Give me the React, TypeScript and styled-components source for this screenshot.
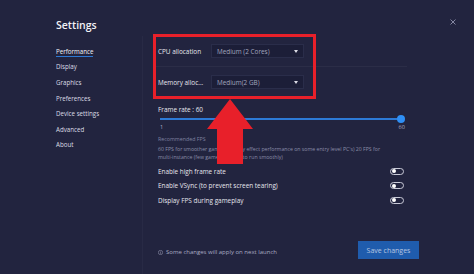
import React from 'react';
import styled, { createGlobalStyle } from 'styled-components';

/* global */
const GlobalStyle = createGlobalStyle`
  html, body {
    margin: 0;
    padding: 0;
    background: #22243f;
  }
  body {
    font-family: "Open Sans", "Liberation Sans", sans-serif;
  }
  * {
    box-sizing: border-box;
  }
`

/* styled */
const Window = styled.div`
  position: relative;
  width: 474px;
  height: 274px;
  display: flex;
  flex-direction: column;
  background: #22243f;
  overflow: hidden;
`
const Header = styled.header`
  display: flex;
  justify-content: space-between;
  align-items: flex-start;
  height: 36px;
  padding: 0 18px 0 56px;
`
const Title = styled.h1`
  margin: 0;
  padding-top: 15px;
  font-size: 10.5px;
  line-height: 20px;
  font-weight: 600;
  color: #f2f2f7;
`
const CloseButton = styled.button`
  margin-top: 19px;
  width: 6px;
  height: 6px;
  padding: 0;
  border: none;
  background: none;
  display: flex;
  cursor: pointer;
`
const Body = styled.div`
  display: flex;
  flex: 1;
  min-height: 0;
`
const Sidebar = styled.nav`
  width: 87px;
  margin-left: 56px;
  padding-top: 8px;
  display: flex;
  flex-direction: column;
  align-items: flex-start;
  border-right: 1px solid rgba(255, 255, 255, 0.03);
`
const NavItem = styled.div`
  height: 15.6px;
  display: flex;
  align-items: center;
  cursor: pointer;
`
const NavLabel = styled.span<{ $active?: boolean }>`
  display: inline-block;
  font-size: 6.2px;
  line-height: 8px;
  color: ${p => (p.$active ? '#f4f4f8' : '#dcdde6')};
  border-bottom: 1px solid ${p => (p.$active ? '#2d78d2' : 'transparent')};
  margin-top: 1px;
`
const Content = styled.main`
  flex: 1;
  display: flex;
  flex-direction: column;
  padding: 0 69px 0 15px;
`
const ResourceRow = styled.div`
  display: flex;
  align-items: center;
  height: 30px;
`
const RowLabel = styled.span`
  width: 53px;
  padding-right: 5px;
  font-size: 6.4px;
  color: #e6e6ee;
  white-space: nowrap;
`
const SelectBox = styled.div`
  width: 93px;
  height: 14px;
  padding: 0 5px;
  display: flex;
  align-items: center;
  justify-content: space-between;
  background: #1c1e38;
  border: 1px solid #2a2d4a;
  font-size: 6.4px;
  color: #a3a6bf;
`
const Caret = styled.span`
  width: 0;
  height: 0;
  border-left: 2.5px solid transparent;
  border-right: 2.5px solid transparent;
  border-top: 3px solid #dcdce6;
`
const Divider = styled.div`
  height: 1px;
  margin: 0 -2px 0 -3px;
  background: rgba(255, 255, 255, 0.045);
`
const FieldLabel = styled.div`
  margin-top: 7px;
  line-height: 11px;
  font-size: 6.4px;
  color: #e6e6ee;
`
const Slider = styled.div`
  display: flex;
  align-items: center;
  height: 8px;
  margin-left: 2px;
`
const Track = styled.div`
  flex: 1;
  height: 2px;
  background: #2d7ad6;
`
const Thumb = styled.div`
  width: 8px;
  height: 8px;
  margin-left: -4px;
  border-radius: 50%;
  background: #2f8ff5;
`
const ScaleRow = styled.div`
  display: flex;
  justify-content: space-between;
  margin-left: 2px;
  line-height: 9px;
  font-size: 5.6px;
  color: #a9abc2;
`
const HintTitle = styled.div`
  margin-top: 3px;
  line-height: 8px;
  font-size: 5.3px;
  color: #7f82a0;
`
const HintText = styled.p`
  margin: 2px 0 0;
  line-height: 8px;
  font-size: 5.2px;
  color: #8a8da8;
  white-space: nowrap;
`
const ToggleList = styled.div`
  margin-top: 3px;
  display: flex;
  flex-direction: column;
`
const ToggleRow = styled.div`
  height: 14.5px;
  display: flex;
  align-items: center;
  justify-content: space-between;
  font-size: 6.4px;
  color: #e6e6ee;
`
const Toggle = styled.span<{ $on?: boolean }>`
  width: 14px;
  height: 7px;
  margin-right: 1px;
  padding: 0 1px;
  display: flex;
  align-items: center;
  justify-content: ${p => (p.$on ? 'flex-end' : 'flex-start')};
  border: 1px solid #c9cad8;
  border-radius: 4px;

  &::after {
    content: '';
    width: 4px;
    height: 4px;
    border-radius: 50%;
    background: #ffffff;
  }
`
const Footer = styled.footer`
  margin-top: auto;
  margin-bottom: 15px;
  margin-right: -14px;
  height: 18px;
  display: flex;
  align-items: center;
  justify-content: space-between;
`
const Note = styled.span`
  display: flex;
  align-items: center;
  gap: 3px;
  margin-top: 4px;
  font-size: 6px;
  color: #a9abc2;
`
const SaveButton = styled.button`
  width: 61px;
  height: 18px;
  padding: 0;
  border: none;
  background: #1f5cad;
  color: #b7c6e2;
  font-family: inherit;
  font-size: 7px;
  cursor: pointer;
`
/* screenshot annotation laid over the content */
const Highlight = styled.div`
  position: absolute;
  left: 153px;
  top: 34px;
  width: 163px;
  height: 65px;
  border: 3px solid #e8202a;
  pointer-events: none;
`
const Arrow = styled.svg`
  position: absolute;
  left: 205px;
  top: 98px;
  pointer-events: none;
`

const navItems = ['Performance', 'Display', 'Graphics', 'Preferences', 'Device settings', 'Advanced', 'About'];
const toggles = ['Enable high frame rate', 'Enable VSync (to prevent screen tearing)', 'Display FPS during gameplay'];

const App = () => {
  return (
    <Window>
      <GlobalStyle />
      <Header>
        <Title>Settings</Title>
        <CloseButton aria-label='Close'>
          <svg width='6' height='6' viewBox='0 0 6 6'>
            <path d='M0.5 0.5L5.5 5.5M5.5 0.5L0.5 5.5' stroke='#9092ad' strokeWidth='0.9' />
          </svg>
        </CloseButton>
      </Header>
      <Body>
        <Sidebar>
          {navItems.map((item, index) => (
            <NavItem key={index}>
              <NavLabel $active={index === 0}>{item}</NavLabel>
            </NavItem>
          ))}
        </Sidebar>
        <Content>
          <ResourceRow>
            <RowLabel>CPU allocation</RowLabel>
            <SelectBox>
              <span>Medium (2 Cores)</span>
              <Caret />
            </SelectBox>
          </ResourceRow>
          <Divider />
          <ResourceRow>
            <RowLabel title='Memory allocation'>Memory alloc...</RowLabel>
            <SelectBox>
              <span>Medium(2 GB)</span>
              <Caret />
            </SelectBox>
          </ResourceRow>
          <FieldLabel>Frame rate : 60</FieldLabel>
          <Slider>
            <Track />
            <Thumb />
          </Slider>
          <ScaleRow>
            <span>1</span>
            <span>60</span>
          </ScaleRow>
          <HintTitle>Recommended FPS</HintTitle>
          <HintText>
            60 FPS for smoother gameplay (may effect performance on some entry level PC's) 20 FPS for
            <br />
            multi-instance (few games may fail to run smoothly)
          </HintText>
          <ToggleList>
            {toggles.map((label, index) => (
              <ToggleRow key={index}>
                <span>{label}</span>
                <Toggle />
              </ToggleRow>
            ))}
          </ToggleList>
          <Footer>
            <Note>
              <svg width='5' height='5' viewBox='0 0 10 10'>
                <circle cx='5' cy='5' r='4.3' fill='none' stroke='#a9abc2' strokeWidth='1' />
                <path d='M5 4.3V7.5M5 2.4V3.3' stroke='#a9abc2' strokeWidth='1' />
              </svg>
              Some changes will apply on next launch
            </Note>
            <SaveButton>Save changes</SaveButton>
          </Footer>
        </Content>
      </Body>
      <Highlight />
      <Arrow width='50' height='68' viewBox='0 0 50 68'>
        <polygon points='25,1 48,31 38,31 38,66 12,66 12,31 2,31' fill='#e8202a' />
      </Arrow>
    </Window>
  );
};

export default App;
